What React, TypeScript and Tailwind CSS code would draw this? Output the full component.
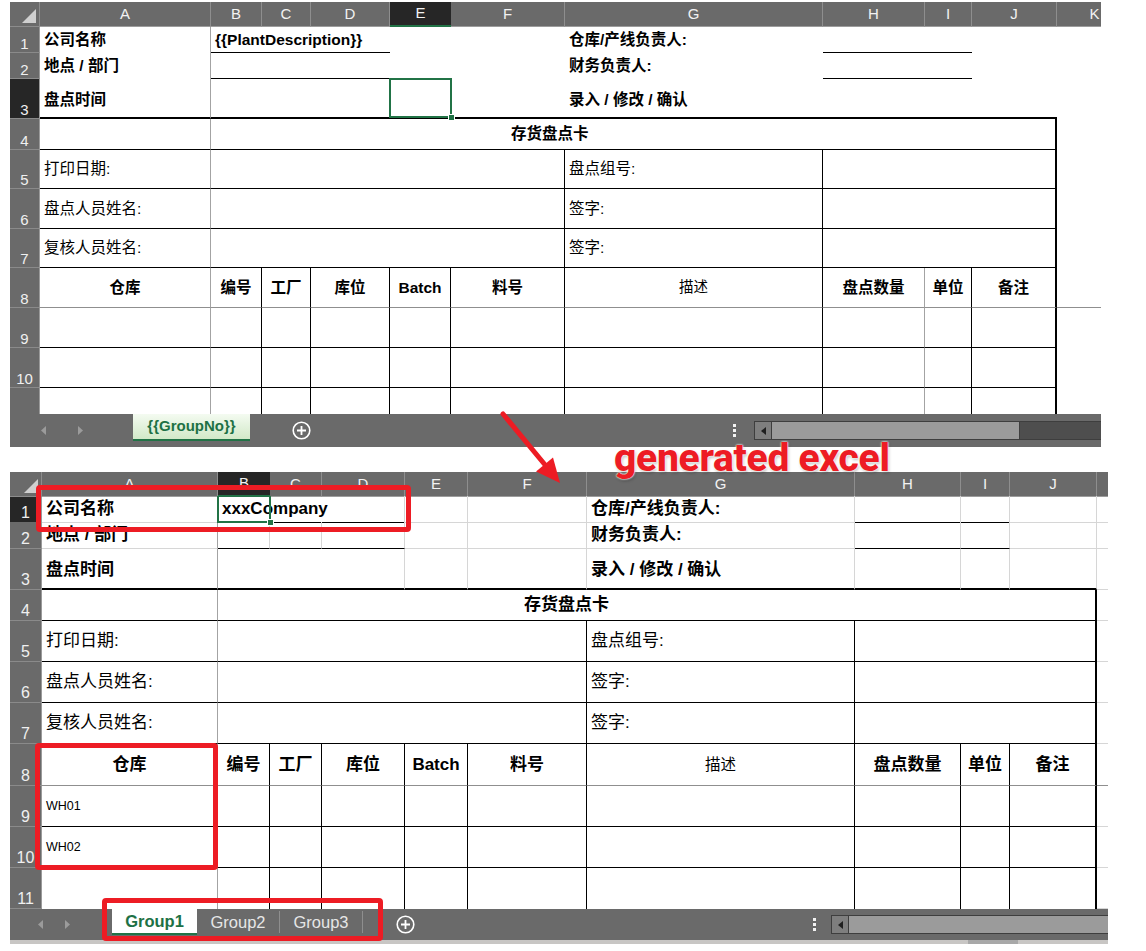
import React from "react";
import clsx from "clsx";

type Ln = "n" | "g" | "d" | "k" | "t";

const RIGHT: Record<Ln, string> = {
  n: "",
  g: "border-r border-r-[#d6d6d6]",
  d: "border-r border-r-[#a3a3a3]",
  k: "border-r border-r-black",
  t: "border-r-2 border-r-black",
};

const BOTTOM: Record<Ln, string> = {
  n: "",
  g: "border-b border-b-[#d6d6d6]",
  d: "border-b border-b-[#8f8f8f]",
  k: "border-b border-b-black",
  t: "border-b-2 border-b-black",
};

const SPAN: Record<number, string> = {
  1: "",
  2: "col-span-2",
  3: "col-span-3",
  5: "col-span-5",
  9: "col-span-9",
};

type Cell = { s?: number; t?: string; r?: Ln; b?: Ln; c?: string; sel?: boolean };
type Row = { n: string; h: string; sel?: boolean; cells: Cell[] };

const B = "font-bold";
const B3 = "font-bold pt-[3px]";
const HD = "font-bold justify-center";

// rows 4..11 are the same card on both sheets
function cardRows(o: {
  h4: string;
  h: string;
  h8: string;
  h11: string;
  titlePad: string;
  hRight: Ln;
  k: Ln;
  descr: string;
  wh?: [string, string];
  whCls?: string;
}): Row[] {
  const info = (n: string, a: string, g: string): Row => ({
    n,
    h: o.h,
    cells: [
      { t: a, r: "d", b: "k" },
      { s: 5, r: "k", b: "k" },
      { t: g, r: "k", b: "k" },
      { s: 3, r: "t", b: "k" },
      { b: o.k },
    ],
  });
  const line = (n: string, h: string, bot: Ln, a?: string): Row => ({
    n,
    h,
    cells: [
      { t: a, r: "d", b: bot, c: o.whCls },
      { r: "k", b: bot },
      { r: "k", b: bot },
      { r: "k", b: bot },
      { r: "k", b: bot },
      { r: "k", b: bot },
      { r: "k", b: bot },
      { r: o.hRight, b: bot },
      { r: "k", b: bot },
      { r: "t", b: bot },
      { b: o.k },
    ],
  });
  return [
    {
      n: "4",
      h: o.h4,
      cells: [
        { r: "d", b: "k" },
        { s: 9, t: "存货盘点卡", r: "t", b: "k", c: clsx(B, o.titlePad) },
        { b: o.k },
      ],
    },
    info("5", "打印日期:", "盘点组号:"),
    info("6", "盘点人员姓名:", "签字:"),
    info("7", "复核人员姓名:", "签字:"),
    {
      n: "8",
      h: o.h8,
      cells: [
        { t: "仓库", r: "d", b: "d", c: HD },
        { t: "编号", r: "k", b: "d", c: HD },
        { t: "工厂", r: "k", b: "d", c: HD },
        { t: "库位", r: "k", b: "d", c: HD },
        { t: "Batch", r: "k", b: "d", c: HD },
        { t: "料号", r: "k", b: "d", c: HD },
        { t: "描述", r: "k", b: "d", c: clsx("justify-center", o.descr) },
        { t: "盘点数量", r: o.hRight, b: "d", c: HD },
        { t: "单位", r: "k", b: "d", c: HD },
        { t: "备注", r: "t", b: "d", c: HD },
        { b: "d" },
      ],
    },
    line("9", o.h, "k", o.wh?.[0]),
    line("10", o.h, "k", o.wh?.[1]),
    line("11", o.h11, "n"),
  ];
}

const topRows: Row[] = [
  {
    n: "1",
    h: "h-[26px]",
    cells: [
      { t: "公司名称", r: "d", c: B },
      { s: 3, t: "{{PlantDescription}}", b: "k", c: B },
      {},
      {},
      { t: "仓库/产线负责人:", c: B },
      { s: 2, b: "k" },
      {},
      {},
    ],
  },
  {
    n: "2",
    h: "h-[26px]",
    cells: [
      { t: "地点 / 部门", r: "d", c: B },
      { s: 3, b: "k" },
      {},
      {},
      { t: "财务负责人:", c: B },
      { s: 2, b: "k" },
      {},
      {},
    ],
  },
  {
    n: "3",
    h: "h-[40px]",
    sel: true,
    cells: [
      { t: "盘点时间", r: "d", b: "t", c: B3 },
      { s: 3, b: "t" },
      { b: "t", sel: true },
      { b: "t" },
      { t: "录入 / 修改 / 确认", b: "t", c: B3 },
      { b: "t" },
      { b: "t" },
      { b: "t" },
      {},
    ],
  },
  ...cardRows({
    h4: "h-[31px]",
    h: "h-[40px]",
    h8: "h-[40px]",
    h11: "h-[40px]",
    titlePad: "pl-[300px]",
    hRight: "d",
    k: "n",
    descr: "text-[14.5px]",
  }),
];
// rows 5 and 7 are one pixel shorter on the template
topRows[4].h = "h-[39px]";
topRows[6].h = "h-[39px]";

const bottomRows: Row[] = [
  {
    n: "1",
    h: "h-[26px]",
    sel: true,
    cells: [
      { t: "公司名称", r: "d", c: B },
      { t: "xxxCompany", r: "n", b: "k", c: B, sel: true },
      { r: "n", b: "k" },
      { b: "k" },
      {},
      {},
      { t: "仓库/产线负责人:", c: B },
      { b: "k" },
      { b: "k" },
      {},
      {},
    ],
  },
  {
    n: "2",
    h: "h-[27px]",
    cells: [
      { t: "地点 / 部门", r: "d", c: B },
      { b: "k" },
      { b: "k" },
      { b: "k" },
      {},
      {},
      { t: "财务负责人:", c: B },
      { b: "k" },
      { b: "k" },
      {},
      {},
    ],
  },
  {
    n: "3",
    h: "h-[41px]",
    cells: [
      { t: "盘点时间", r: "d", b: "t", c: B3 },
      { s: 3, b: "t" },
      { b: "t" },
      { b: "t" },
      { t: "录入 / 修改 / 确认", b: "t", c: B3 },
      { b: "t" },
      { b: "t" },
      { b: "t" },
      {},
    ],
  },
  ...cardRows({
    h4: "h-[31px]",
    h: "h-[41px]",
    h8: "h-[42px]",
    h11: "h-[41px]",
    titlePad: "pl-[306px]",
    hRight: "k",
    k: "g",
    descr: "text-[15.5px]",
    wh: ["WH01", "WH02"],
    whCls: "text-[12.5px]",
  }),
];

function SheetCell({ cell, def }: { cell: Cell; def: Ln }) {
  return (
    <div
      className={clsx(
        "relative flex min-w-0 items-center whitespace-nowrap px-[4px]",
        SPAN[cell.s ?? 1],
        RIGHT[cell.r ?? def],
        BOTTOM[cell.b ?? def],
        cell.c
      )}
    >
      {cell.t}
      {cell.sel && (
        <>
          <div className="pointer-events-none absolute -top-px -left-px -right-px -bottom-px z-10 border-2 border-[#217346]" />
          <div className="absolute -right-[4px] -bottom-[4px] z-10 h-[7px] w-[7px] border border-white bg-[#217346]" />
        </>
      )}
    </div>
  );
}

function Sheet(props: {
  cols: string;
  headH: string;
  bodyH: string;
  width: string;
  letters: string[];
  selCol: number;
  rows: Row[];
  def: Ln;
  text: string;
  num: string;
  children: React.ReactNode;
}) {
  return (
    <div className={clsx("ml-[10px] overflow-hidden", props.width)}>
      {/* column letters */}
      <div className={clsx("grid", props.cols, props.headH)}>
        <div className="relative border-r border-b border-[#8c8c8c] bg-[#6a6a6a]">
          <svg className="absolute right-[2px] bottom-[2px]" width="16" height="16" viewBox="0 0 16 16">
            <polygon points="1,15 15,15 15,1" fill="#cfcfcf" />
          </svg>
        </div>
        {props.letters.map((l, i) => (
          <div
            key={i}
            className={clsx(
              "flex items-center justify-center font-['Liberation_Sans',sans-serif] text-[15px] text-[#f2f2f2]",
              i === props.selCol
                ? "border-b-2 border-b-[#217346] bg-[#262626]"
                : "border-r border-b border-r-[#8e8e8e] border-b-[#9c9c9c] bg-[#6a6a6a]"
            )}
          >
            {l}
          </div>
        ))}
      </div>

      {/* cells */}
      <div className={clsx("overflow-hidden bg-white font-['Liberation_Sans','Noto_Sans_CJK_SC',sans-serif] text-black", props.bodyH, props.text)}>
        {props.rows.map((row) => (
          <div key={row.n} className={clsx("grid", props.cols, row.h)}>
            <div
              className={clsx(
                "flex items-end justify-center border-r border-b border-r-[#9a9a9a] border-b-[#8a8a8a] pb-[1px] font-['Liberation_Sans',sans-serif] font-normal leading-none text-[#f0f0f0]",
                props.num,
                row.sel ? "bg-[#262626]" : "bg-[#6a6a6a]"
              )}
            >
              {row.n}
            </div>
            {row.cells.map((c, i) => (
              <SheetCell key={i} cell={c} def={props.def} />
            ))}
          </div>
        ))}
      </div>

      {props.children}
    </div>
  );
}

function NavArrows({ className }: { className: string }) {
  return (
    <div className={clsx("flex items-center", className)}>
      <svg width="5" height="9" viewBox="0 0 5 9">
        <polygon points="5,0 5,9 0,4.5" fill="#9b9b9b" />
      </svg>
      <svg width="5" height="9" viewBox="0 0 5 9">
        <polygon points="0,0 0,9 5,4.5" fill="#9b9b9b" />
      </svg>
    </div>
  );
}

function PlusIcon({ className }: { className: string }) {
  return (
    <svg className={className} width="19" height="19" viewBox="0 0 19 19">
      <circle cx="9.5" cy="9.5" r="8.3" fill="none" stroke="#fff" strokeWidth="1.6" />
      <path d="M9.5 5v9M5 9.5h9" stroke="#fff" strokeWidth="1.8" />
    </svg>
  );
}

function Dots({ className }: { className: string }) {
  return (
    <div className={clsx("flex w-[3px] flex-col gap-[2px]", className)}>
      <span className="h-[3px] w-[3px] bg-[#f2f2f2]" />
      <span className="h-[3px] w-[3px] bg-[#f2f2f2]" />
      <span className="h-[3px] w-[3px] bg-[#f2f2f2]" />
    </div>
  );
}

function ScrollBar({ className, thumb, track }: { className: string; thumb: string; track: boolean }) {
  return (
    <div className={clsx("flex h-[19px] border border-r-0 border-[#3e3e3e]", className)}>
      <div className="flex w-[17px] items-center justify-center border-r border-[#3e3e3e] bg-[#7e7e7e]">
        <svg width="5" height="8" viewBox="0 0 5 8">
          <polygon points="5,0 5,8 0,4" fill="#1f1f1f" />
        </svg>
      </div>
      <div className={clsx("bg-[#9b9b9b]", thumb, track && "border-r border-[#3e3e3e]")} />
      {track && <div className="flex-1 bg-[#4e4e4e]" />}
    </div>
  );
}

export default function App() {
  const tabFont = "font-['Liberation_Sans',sans-serif]";
  return (
    <div className="relative h-[951px] w-[1146px] overflow-hidden bg-white">
      {/* template sheet */}
      <div className="pt-[2px]">
        <Sheet
          cols="grid-cols-[30px_171px_51px_49px_79px_61px_114px_258px_102px_47px_85px_76px]"
          headH="h-[25px]"
          bodyH="h-[387px]"
          width="w-[1091px]"
          letters={["A", "B", "C", "D", "E", "F", "G", "H", "I", "J", "K"]}
          selCol={4}
          rows={topRows}
          def="n"
          text="text-[15.5px]"
          num="text-[15px]"
        >
          <div className="flex h-[33px] items-center bg-[#6a6a6a]">
            <NavArrows className="w-[123px] gap-[32px] pl-[31px]" />
            <div
              className={clsx(
                "flex h-[27px] w-[117px] items-center justify-center self-start border-b-2 border-[#217346] bg-linear-to-b from-[#f4fbf1] to-[#d2e9c8] text-[15px] font-bold text-[#1e7145]",
                tabFont
              )}
            >
              {"{{GroupNo}}"}
            </div>
            <PlusIcon className="ml-[42px]" />
            <Dots className="ml-[422px]" />
            <ScrollBar className="ml-[18px] flex-1" thumb="w-[248px]" track />
          </div>
        </Sheet>
      </div>

      {/* generated sheet */}
      <div className="pt-[25px]">
        <Sheet
          cols="grid-cols-[32px_176px_52px_52px_83px_63px_119px_268px_106px_49px_87px_76px]"
          headH="h-[24px]"
          bodyH="h-[413px]"
          width="w-[1098px]"
          letters={["A", "B", "C", "D", "E", "F", "G", "H", "I", "J", ""]}
          selCol={1}
          rows={bottomRows}
          def="g"
          text="text-[17px]"
          num="text-[16px]"
        >
          <div className="flex h-[31px] items-center bg-[#6a6a6a]">
            <NavArrows className="w-[102px] gap-[22px] pl-[28px]" />
            <div
              className={clsx(
                "flex h-[26px] w-[85px] items-center justify-center self-start border-b-2 border-[#217346] bg-white text-[16.5px] font-bold text-[#1e7145]",
                tabFont
              )}
            >
              Group1
            </div>
            <div className={clsx("mt-[2px] flex h-[22px] w-[83px] items-center justify-center self-start border-r border-[#8e8e8e] text-[16.5px] text-[#e6e6e6]", tabFont)}>
              Group2
            </div>
            <div className={clsx("mt-[2px] flex h-[22px] w-[83px] items-center justify-center self-start border-r border-[#8e8e8e] text-[16.5px] text-[#e6e6e6]", tabFont)}>
              Group3
            </div>
            <PlusIcon className="ml-[33px]" />
            <Dots className="ml-[398px]" />
            <ScrollBar className="ml-[15px] flex-1" thumb="flex-1" track={false} />
          </div>
          <div className="flex h-[4px] bg-[#c8c6c4]">
            <div className="ml-[958px] w-[50px] bg-[#a8a8a8]" />
          </div>
        </Sheet>
      </div>

      {/* annotations */}
      <div className="pointer-events-none absolute top-[485px] left-[36px] h-[47px] w-[375px] rounded-[4px] border-[5px] border-[#ed1c24]" />
      <div className="pointer-events-none absolute top-[743px] left-[35px] h-[127px] w-[183px] rounded-[4px] border-[5px] border-[#ed1c24]" />
      <div className="pointer-events-none absolute top-[898px] left-[102px] h-[43px] w-[281px] rounded-[4px] border-[5px] border-[#ed1c24]" />

      <svg className="pointer-events-none absolute top-0 left-0" width="1146" height="951">
        <line x1="503" y1="414" x2="546" y2="466" stroke="#ed1c24" strokeWidth="5" strokeLinecap="round" />
        <polygon points="560,483 536,471.5 553,457.5" fill="#ed1c24" />
      </svg>

      <div className="pointer-events-none absolute top-[439px] left-[614px] font-['Roboto',sans-serif] text-[39px] leading-none font-extrabold tracking-[-0.3px] whitespace-nowrap text-[#ed1c24] [text-shadow:0_0_2px_#fff,0_0_2px_#fff,1px_2px_3px_rgba(0,0,0,0.25)]">
        generated excel
      </div>
    </div>
  );
}
